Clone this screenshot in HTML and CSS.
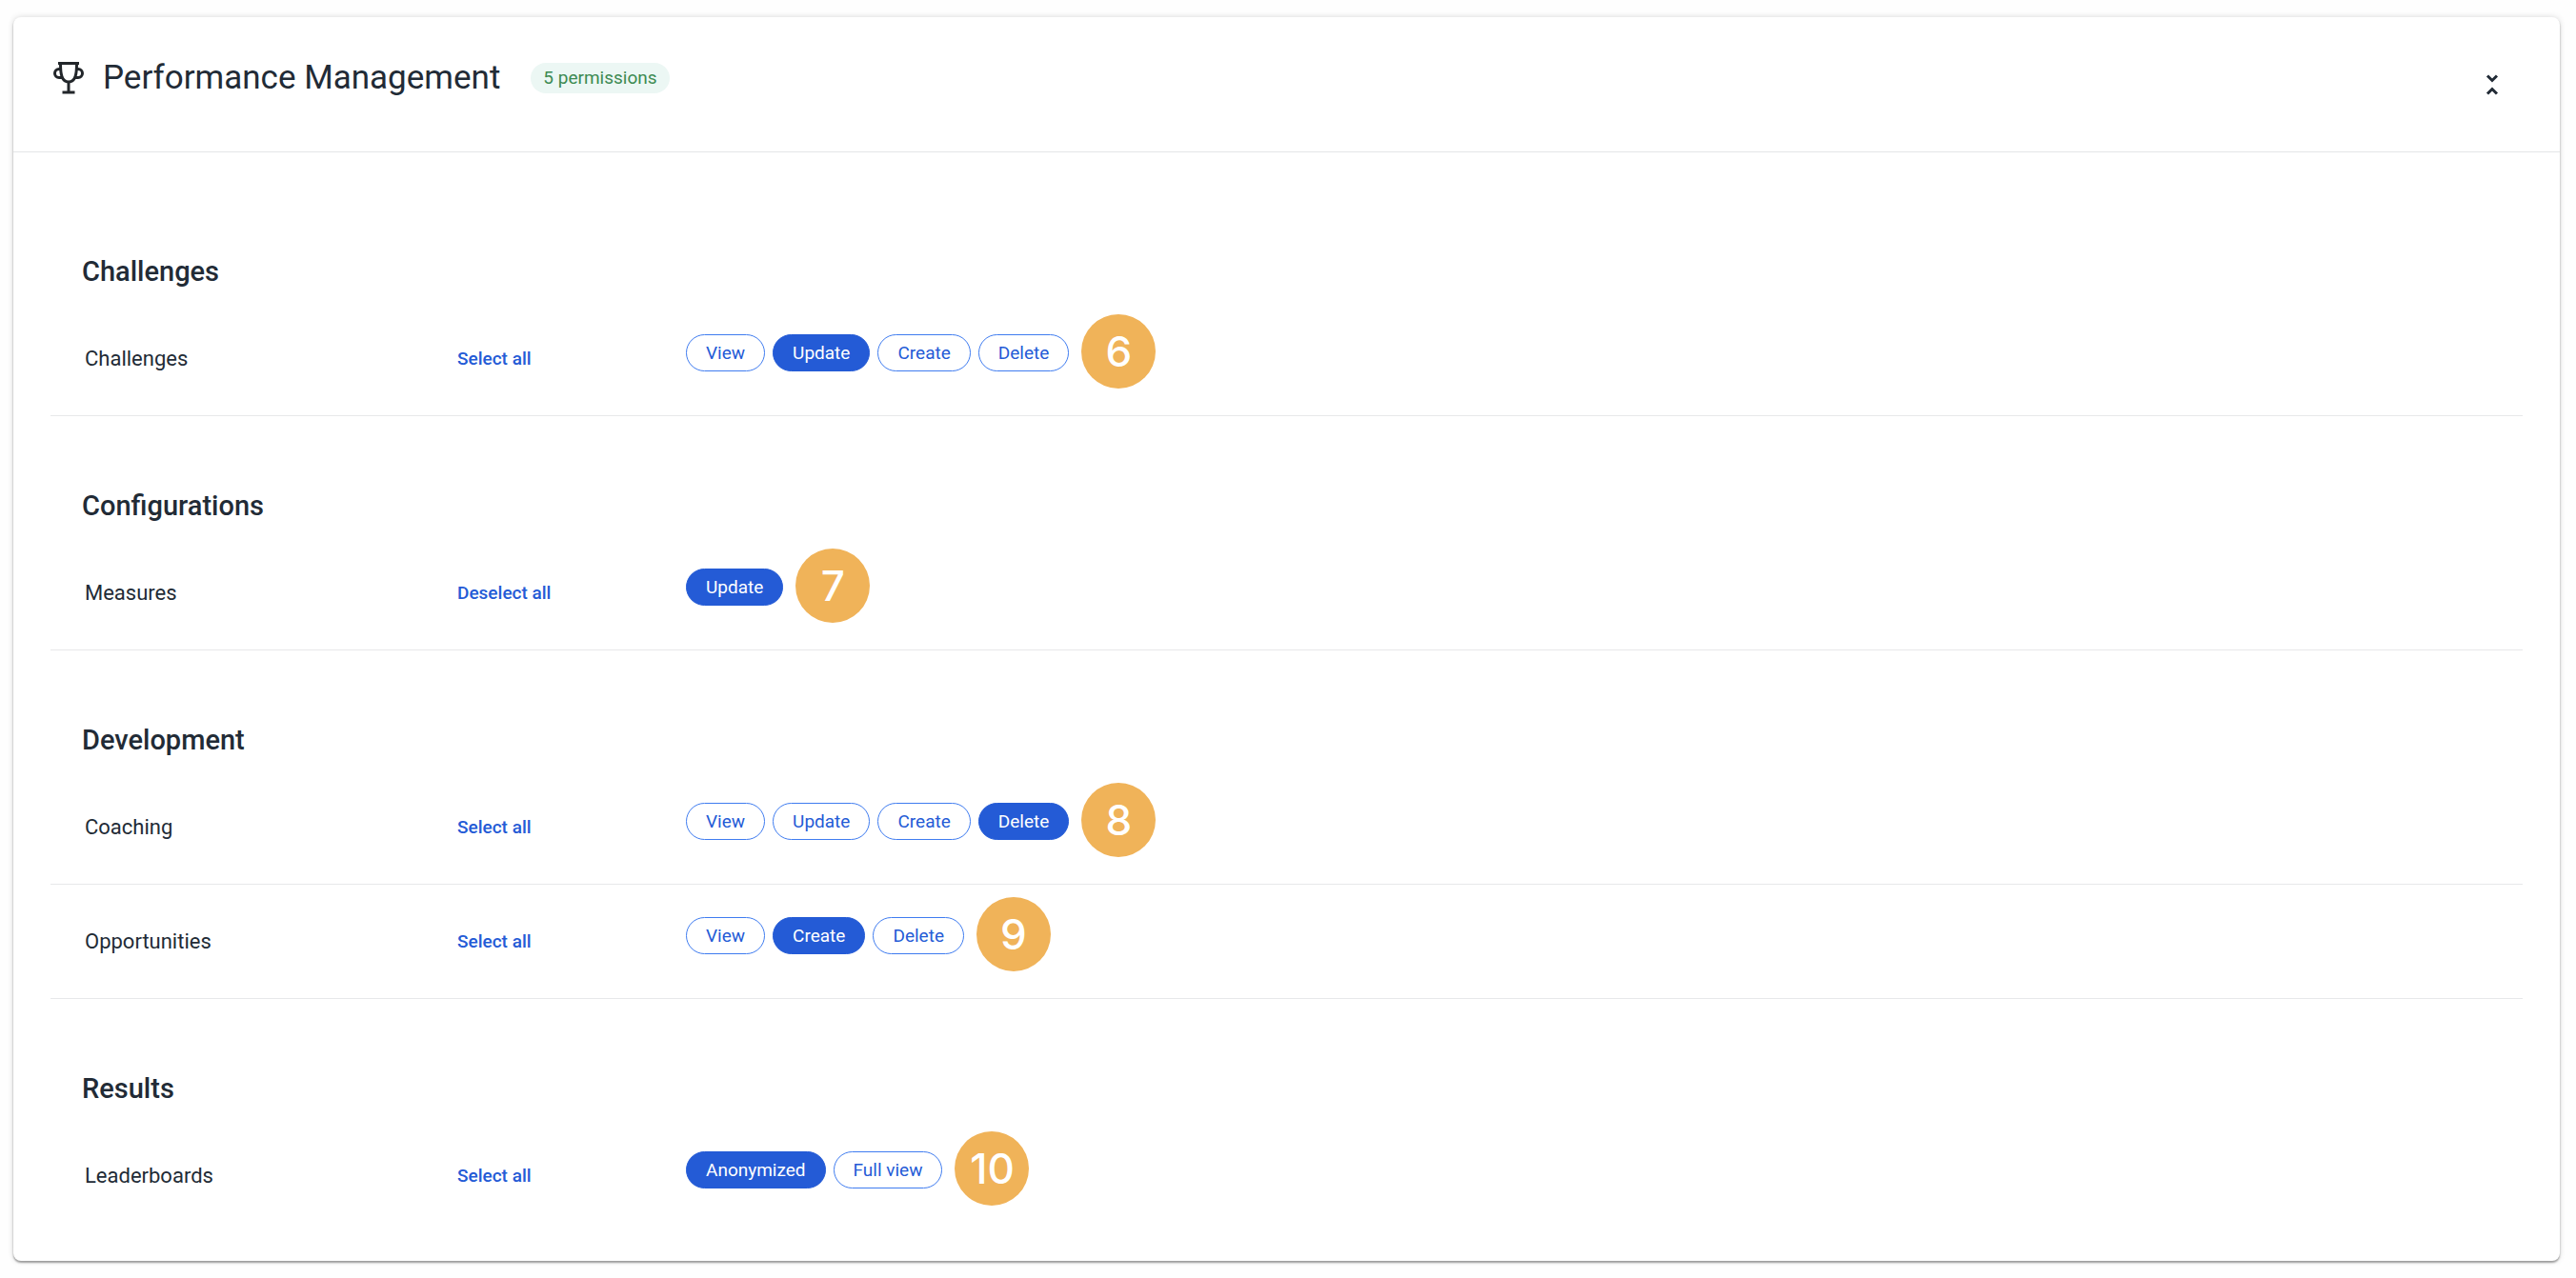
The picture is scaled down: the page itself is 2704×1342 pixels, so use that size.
FILE: index.html
```html
<!doctype html>
<html lang="en">
<head>
	<meta charset="UTF-8">
	<title>Performance Management</title>
	<link rel="stylesheet" href="styles.css">
</head>
<body>
	<main class="card">
		<header class="card_head">
			<div class="card_title">
				<svg class="trophy" viewBox="0 0 32 34" fill="none" stroke="#22262a" stroke-width="3" aria-hidden="true">
					<path d="M5 1.5h22"/>
					<path d="M7.5 2c0 10 1 19 8.500 19s8.500-9 8.500-19"/>
					<path d="M8 7.500H6a4.500 4.500 0 0 0 0 9h3.500M24 7.500h2a4.500 4.500 0 0 1 0 9h-3.500"/>
					<path d="M16 21v11M9.500 32h13"/>
				</svg>
				<h1>Performance Management</h1>
				<span class="count">5 permissions</span>
			</div>
			<button class="collapse" type="button" aria-label="Collapse">
				<svg viewBox="0 0 12 22" fill="none" stroke="#222b36" stroke-width="3" aria-hidden="true">
					<path d="M1 1.500l5 5 5-5M1 20.500l5-5 5 5"/>
				</svg>
			</button>
		</header>

		<div class="card_body">
			<section class="group">
				<h2>Challenges</h2>
				<div class="row">
					<span class="name">Challenges</span>
					<div><button class="toggle_all" type="button">Select all</button></div>
					<div class="chips">
						<button class="chip" type="button">View</button>
						<button class="chip chip_on" type="button">Update</button>
						<button class="chip" type="button">Create</button>
						<button class="chip" type="button">Delete</button>
						<span class="marker">6</span>
					</div>
				</div>
			</section>

			<section class="group">
				<h2>Configurations</h2>
				<div class="row">
					<span class="name">Measures</span>
					<div><button class="toggle_all" type="button">Deselect all</button></div>
					<div class="chips">
						<button class="chip chip_on" type="button">Update</button>
						<span class="marker">7</span>
					</div>
				</div>
			</section>

			<section class="group">
				<h2>Development</h2>
				<div class="row">
					<span class="name">Coaching</span>
					<div><button class="toggle_all" type="button">Select all</button></div>
					<div class="chips">
						<button class="chip" type="button">View</button>
						<button class="chip" type="button">Update</button>
						<button class="chip" type="button">Create</button>
						<button class="chip chip_on" type="button">Delete</button>
						<span class="marker">8</span>
					</div>
				</div>
				<div class="row">
					<span class="name">Opportunities</span>
					<div><button class="toggle_all" type="button">Select all</button></div>
					<div class="chips">
						<button class="chip" type="button">View</button>
						<button class="chip chip_on" type="button">Create</button>
						<button class="chip" type="button">Delete</button>
						<span class="marker">9</span>
					</div>
				</div>
			</section>

			<section class="group">
				<h2>Results</h2>
				<div class="row">
					<span class="name">Leaderboards</span>
					<div><button class="toggle_all" type="button">Select all</button></div>
					<div class="chips">
						<button class="chip chip_on" type="button">Anonymized</button>
						<button class="chip" type="button">Full view</button>
						<span class="marker">10</span>
					</div>
				</div>
			</section>
		</div>
	</main>
</body>
</html>
```

FILE: styles.css
```css
*{box-sizing:border-box}
body{
	margin:0;
	padding:18px 17px 18px 14px;
	background:#fefefe;
	color:#222b36;
	font-family:Roboto,"Liberation Sans",sans-serif;
}
button{
	margin:0;
	padding:0;
	border:0;
	background:none;
	font-family:inherit;
	cursor:pointer;
}
h1,h2{margin:0}

.card{
	border-radius:8px;
	background:#fff;
	box-shadow:0 2px 2px rgba(0,0,0,.34),0 0 6px rgba(0,0,0,.16);
}
.card_head{
	display:flex;
	justify-content:space-between;
	align-items:center;
	height:142px;
	padding:0 64px 0 42px;
	border-bottom:1px solid #e4e5e7;
}
.card_title{
	display:flex;
	align-items:center;
	padding-bottom:14px;
}
.card_title h1{
	margin:0 32px 0 20px;
	font-size:35px;
	line-height:44px;
	font-weight:400;
}
.trophy{width:32px;height:34px}
.count{
	padding:0 13px;
	border-radius:16px;
	background:#ecf7f4;
	color:#3c8a52;
	font-size:19px;
	line-height:32px;
}
.collapse svg{
	display:block;
	width:14px;
	height:22px;
}

.card_body{padding:31px 39px 29px}
.group h2{
	padding:78px 0 16px 33px;
	font-size:29px;
	line-height:32px;
	font-weight:500;
}
/* name | select all | permissions */
.row{
	display:grid;
	grid-template-columns:391px 240px 1fr;
	align-items:center;
	height:120px;
	padding-left:36px;
	border-bottom:1px solid #e7e8ea;
}
/* no line under the last row of the card */
.group:last-child .row:last-child{border-bottom-color:transparent}
.name{font-size:22px}
.toggle_all{
	color:#245bd6;
	font-size:19px;
	font-weight:500;
}

.chips{
	display:flex;
	align-items:center;
	gap:8px;
	padding-bottom:12px;
}
.chip{
	height:39px;
	padding:0 20px;
	border:1px solid #3f7cf0;
	border-radius:20px;
	color:#245bd6;
	font-size:19px;
}
.chip_on{
	border-color:#245bd6;
	background:#245bd6;
	color:#fff;
}
/* numbered callouts */
.marker{
	width:78px;
	margin:0 0 4px 5px;
	border-radius:50%;
	background:#f0b359;
	color:#fff;
	font-family:Inter,"Liberation Sans",sans-serif;
	font-size:44px;
	font-weight:500;
	line-height:78px;
	text-align:center;
}
```
